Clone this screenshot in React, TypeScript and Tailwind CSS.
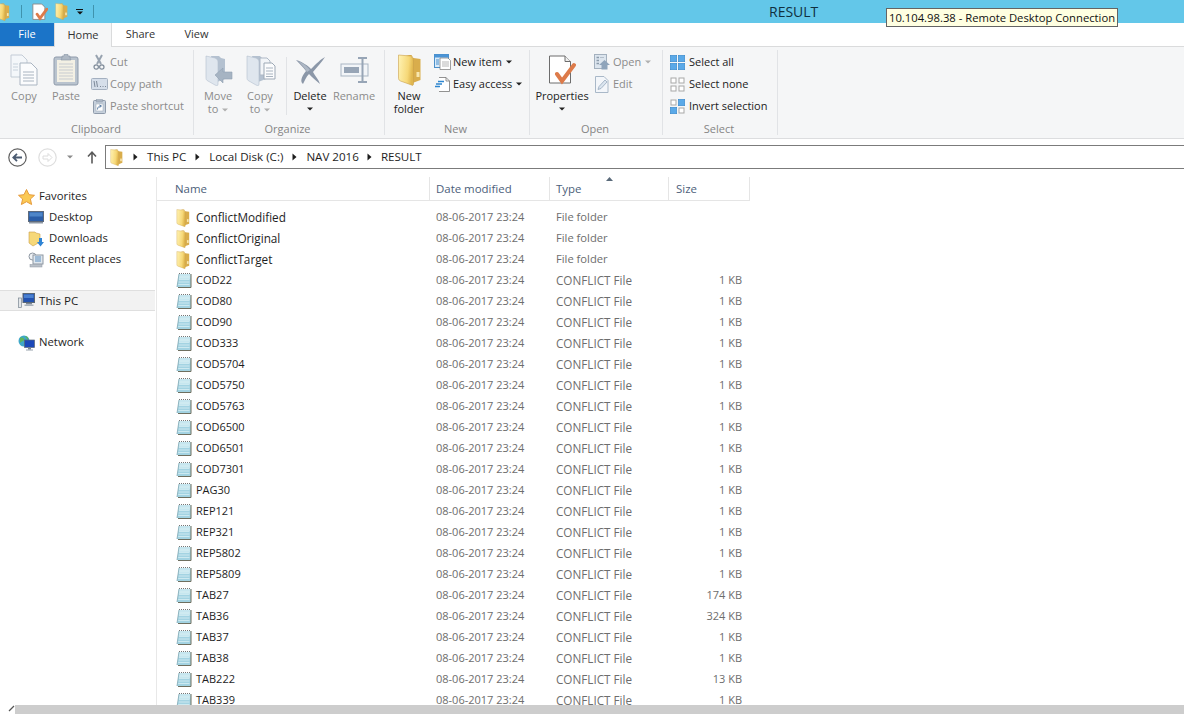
import React, { useId } from "react";

function Folder({ w = 14, h = 18 }: { w?: number; h?: number }) {
  const id = useId();
  return (
    <svg width={w} height={h} viewBox="0 0 24 32" className="shrink-0">
      <defs>
        <linearGradient id={id} x1="0" y1="0" x2="1" y2="0.2">
          <stop offset="0" stopColor="#fff3b4" />
          <stop offset="0.7" stopColor="#f6d878" />
          <stop offset="1" stopColor="#e0b64e" />
        </linearGradient>
      </defs>
      <path d="M8 1 L14 1 L16 4 L23 5 V26 L15 29 V3 Z" fill="#d9ad4c" />
      <path d="M1 1 L13 2 C15 3 16 5 16 7 V30 C16 31 15 32 14 31 L3 27 C1 26 1 25 1 23 Z" fill={`url(#${id})`} stroke="#c9a04a" strokeWidth="0.6" />
      <rect x="19" y="18" width="3" height="5" fill="#fff5c8" opacity="0.8" />
    </svg>
  );
}

function Note() {
  return (
    <svg width="16" height="17" viewBox="0 0 16 17" className="shrink-0">
      <path d="M3 2 H15 V15 H1 Z" fill="#a3d3e2" />
      <path d="M3 2 H15 L14 7 H2.2 Z" fill="#c6e6ef" />
      <path d="M15 2 V15.5 H2" fill="none" stroke="#6f6f5f" strokeWidth="1" />
      <path d="M3 2 L1 15" stroke="#7fa7b3" strokeWidth="0.8" />
      <path d="M3 1.5 H15" stroke="#777" strokeWidth="1.2" strokeDasharray="1 1" />
      <path d="M3.5 5 H13.5 M3 7.5 H13.5 M2.6 10 H13.5 M2.2 12.5 H13.5" stroke="#dff2f6" strokeWidth="0.7" />
    </svg>
  );
}

function Arrow() {
  return (
    <svg width="5" height="8" viewBox="0 0 5 8" className="shrink-0">
      <path d="M0.5 0.5 L4.5 4 L0.5 7.5 Z" fill="#1c1c1c" />
    </svg>
  );
}

function Down({ c = "#222" }: { c?: string }) {
  return (
    <svg width="6" height="4" viewBox="0 0 6 4" className="inline-block shrink-0">
      <path d="M0 0.5 H6 L3 3.5 Z" fill={c} />
    </svg>
  );
}

const CopyBig = () => (
  <svg width="28" height="32" viewBox="0 0 28 32">
    <path d="M1 1 H12 L17 6 V23 H1 Z" fill="#f4f7fa" stroke="#c3ccd6" />
    <path d="M10 9 H21 L27 15 V31 H10 Z" fill="#fbfcfd" stroke="#aab5c2" />
    <path d="M13 18 H24 M13 21 H24 M13 24 H24 M13 27 H24" stroke="#a9b4c0" />
    <path d="M3 10 H8 M3 13 H8 M3 16 H8" stroke="#c7d2dc" />
  </svg>
);
const PasteBig = () => (
  <svg width="26" height="32" viewBox="0 0 26 32">
    <rect x="1" y="3" width="24" height="28" rx="2" fill="#b9c3ce" stroke="#8f9bab" />
    <rect x="4" y="6" width="18" height="22" fill="#f3f0e4" />
    <path d="M6 10 H20 M6 13 H20 M6 16 H20 M6 19 H20 M6 22 H20 M6 25 H20" stroke="#c7cbd0" />
    <path d="M9 4 V2 H11 V0.5 H15 V2 H17 V4 L18 6 H8 Z" fill="#aeb8c4" stroke="#8794a4" strokeWidth="0.6" />
  </svg>
);
const Scissors = () => (
  <svg width="12" height="16" viewBox="0 0 12 16">
    <path d="M3 1 L8 10 M9 1 L4 10" stroke="#98a3b0" strokeWidth="2" />
    <circle cx="3.2" cy="13" r="2.2" fill="none" stroke="#7f8b99" strokeWidth="1.2" />
    <circle cx="8.8" cy="13" r="2.2" fill="none" stroke="#7f8b99" strokeWidth="1.2" />
  </svg>
);
const CopyPathI = () => (
  <svg width="17" height="12" viewBox="0 0 17 12">
    <rect x="0.5" y="0.5" width="16" height="11" rx="1" fill="#d5deea" stroke="#a4b0c0" />
    <path d="M3 3 L4 9 M5.5 3 L6.5 9" stroke="#7c8898" />
    <path d="M9 8.5 H10 M11.5 8.5 H12.5 M14 8.5 H15" stroke="#7c8898" />
  </svg>
);
const PasteShort = () => (
  <svg width="13" height="15" viewBox="0 0 13 15">
    <rect x="0.5" y="1.5" width="12" height="13" rx="1" fill="#c6d0dc" stroke="#8e9aaa" />
    <rect x="3.5" y="0.5" width="6" height="2.5" fill="#aab5c3" stroke="#8e9aaa" strokeWidth="0.5" />
    <rect x="3" y="5" width="7" height="7" fill="#fff" stroke="#9aa6b5" strokeWidth="0.5" />
    <path d="M4.5 10.5 C4.5 8 6 7 8 7 M6.5 6 L8.5 7 L6.5 8.5" stroke="#5d7fa6" fill="none" />
  </svg>
);
const MoveTo = () => (
  <svg width="28" height="31" viewBox="0 0 28 31" className="ml-[2px]">
    <path d="M6 1 H14 L16 3 L20 4 V24 L12 27 Z" fill="#b4c1d0" />
    <path d="M1 1 L10 3 C12 4 13 5 13 7 V29 C13 31 12 31 10 30 L3 26 C1 25 1 24 1 22 Z" fill="#dfe6ee" stroke="#b4c0cf" strokeWidth="0.6" />
    <path d="M10 20 L18 13 V17 H27 V24 H18 V28 Z" fill="#a6b4c3" stroke="#92a1b2" strokeWidth="0.6" />
  </svg>
);
const CopyTo = () => (
  <svg width="30" height="31" viewBox="0 0 30 31" className="ml-[2px]">
    <path d="M6 1 H14 L16 3 L20 4 V24 L12 27 Z" fill="#b4c1d0" />
    <path d="M1 1 L10 3 C12 4 13 5 13 7 V29 C13 31 12 31 10 30 L3 26 C1 25 1 24 1 22 Z" fill="#dfe6ee" stroke="#b4c0cf" strokeWidth="0.6" />
    <path d="M14 3 H21 L24 6 V20 H14 Z" fill="#f2f5f8" stroke="#aeb9c6" />
    <path d="M18 8 H26 L29 11 V24 H18 Z" fill="#fbfcfd" stroke="#9ea9b6" />
    <path d="M20 13 H27 M20 16 H27 M20 19 H27 M20 21.5 H27" stroke="#a9b4c0" />
  </svg>
);
const DeleteI = () => (
  <svg width="31" height="29" viewBox="0 0 31 29">
    <path d="M1 4 C8 6 13 10 16 13 C21 8 26 3 30 1 C27 6 22 11 18 16 C20 20 24 24 25 28 C21 25 17 21 14 18 C11 21 10 24 8 28 C5 26 6 21 11 15 C8 11 4 7 1 4 Z" fill="#8b97a8" />
    <path d="M3 5 C8 7 12 10 15 14 L12 16 C9 11 6 8 3 5 Z" fill="#aeb8c5" />
  </svg>
);
const RenameI = () => (
  <svg width="29" height="26" viewBox="0 0 29 26">
    <rect x="1" y="7" width="27" height="12" fill="#f2f5f8" stroke="#a9b5c3" />
    <rect x="4" y="10" width="15" height="6" fill="#97a5b6" />
    <path d="M18 1 H27 M18 25 H27 M22.5 1 V25" stroke="#97a5b6" strokeWidth="2" fill="none" />
  </svg>
);
const NewItem = () => (
  <svg width="17" height="16" viewBox="0 0 17 16">
    <rect x="0.5" y="0.5" width="14" height="13" fill="#d9ebfa" stroke="#4b8fc9" />
    <rect x="0.5" y="0.5" width="14" height="3" fill="#4b94d6" />
    <path d="M6 4 H14 L16.5 6.5 V15.5 H6 Z" fill="#fff" stroke="#777" strokeWidth="0.7" />
    <path d="M8 8 H15 M8 10 H15 M8 12 H15" stroke="#999" strokeWidth="0.7" />
    <path d="M2 6 H5 M2 8 H5 M2 10 H5" stroke="#4b8fc9" />
  </svg>
);
const EasyAccess = () => (
  <svg width="17" height="17" viewBox="0 0 17 17">
    <path d="M5 1.5 H12 L15.5 5 V15.5 H5" fill="#fff" stroke="#777" strokeWidth="0.8" />
    <path d="M12 1.5 V5 H15.5" fill="none" stroke="#777" strokeWidth="0.8" />
    <path d="M4 5.5 H10 M2 8 H8 M1 10.5 H6" stroke="#2f86d0" strokeWidth="1.3" />
  </svg>
);
const PropertiesI = () => (
  <svg width="28" height="30" viewBox="0 0 28 30">
    <path d="M1.5 1 H17 L22.5 6.5 V28 H1.5 Z" fill="#fff" stroke="#6d6d6d" />
    <path d="M17 1 V6.5 H22.5" fill="#eee" stroke="#6d6d6d" />
    <path d="M9 19 L14 26 L26 10" fill="none" stroke="#dd7b4a" strokeWidth="4" strokeLinecap="round" />
  </svg>
);
const SmallProp = () => (
  <svg width="16" height="18" viewBox="0 0 28 30">
    <path d="M1.5 1 H17 L22.5 6.5 V28 H1.5 Z" fill="#fff" stroke="#8a8a8a" strokeWidth="1.6" />
    <path d="M9 19 L14 26 L26 10" fill="none" stroke="#dd7b4a" strokeWidth="5" strokeLinecap="round" />
  </svg>
);
const OpenI = () => (
  <svg width="16" height="16" viewBox="0 0 16 16">
    <rect x="0.5" y="0.5" width="12" height="14" fill="#dce5ee" stroke="#a3b0be" />
    <path d="M2.5 3.5 H5 M2.5 6.5 H5 M2.5 9.5 H5" stroke="#8b9bab" strokeWidth="1.4" />
    <path d="M6 3.5 H10" stroke="#b4bfcb" />
    <path d="M5 11 L10.5 6 L16 11 H13.5 V15.5 H7.5 V11 Z" fill="#8ea4bb" />
  </svg>
);
const EditI = () => (
  <svg width="14" height="17" viewBox="0 0 14 17">
    <path d="M0.5 0.5 H9 L13 4.5 V16.5 H0.5 Z" fill="#f3f6fa" stroke="#a9b8c8" />
    <path d="M3 13.5 L4 10.5 L10 4 L12 6 L6 12.5 Z" fill="#dbe5ef" stroke="#8ca0b6" strokeWidth="0.7" />
  </svg>
);
const Grid4 = ({ on }: { on: boolean[] }) => (
  <svg width="15" height="15" viewBox="0 0 15 15" className="mr-[1px]">
    {[[0, 0], [8, 0], [0, 8], [8, 8]].map(([x, y], i) =>
      on[i] ? (
        <rect key={i} x={x + 0.25} y={y + 0.25} width="6.5" height="6.5" fill="#5aa9e8" stroke="#2d7fc4" strokeWidth="0.5" />
      ) : (
        <rect key={i} x={x + 1} y={y + 1} width="5" height="5" fill="#fff" stroke="#a8a8a8" />
      )
    )}
  </svg>
);
const Star = () => (
  <svg width="17" height="16" viewBox="0 0 17 16">
    <path d="M8.5 0.5 L11 5.7 L16.5 6.3 L12.4 10 L13.6 15.5 L8.5 12.7 L3.4 15.5 L4.6 10 L0.5 6.3 L6 5.7 Z" fill="#fbc954" stroke="#e59a3c" />
  </svg>
);
const Desktop = () => (
  <svg width="16" height="13" viewBox="0 0 16 13">
    <rect x="0.5" y="0.5" width="15" height="10" fill="#2b5ea8" stroke="#5d6a7c" />
    <rect x="1.5" y="1.5" width="13" height="4" fill="#4f86c8" />
    <rect x="1" y="11" width="14" height="1.5" fill="#8d97a3" />
  </svg>
);
const Downloads = () => (
  <svg width="16" height="16" viewBox="0 0 16 16">
    <path d="M1 1 H7 L8 2 L12 3 V11 L5 15 L1 12 Z" fill="#f6d878" stroke="#c9a04a" strokeWidth="0.6" />
    <path d="M11 7 H14 V11 H16 L12.5 15.5 L9 11 H11 Z" fill="#2f84d4" />
  </svg>
);
const Recent = () => (
  <svg width="16" height="16" viewBox="0 0 16 16">
    <circle cx="4.5" cy="4.5" r="3.5" fill="#f0f3f6" stroke="#8e97a2" />
    <rect x="5" y="3" width="10" height="9" fill="#dfe7ee" stroke="#8e97a2" />
    <path d="M7 5 H13 M7 7 H13 M7 9 H13" stroke="#5d8fc0" />
    <rect x="2" y="12.5" width="12" height="2.5" fill="#b9c0c8" stroke="#8e97a2" strokeWidth="0.5" />
  </svg>
);
const ThisPC = () => (
  <svg width="17" height="15" viewBox="0 0 17 15">
    <rect x="0.5" y="5" width="3" height="9.5" fill="#e3e6e9" stroke="#7a8692" strokeWidth="0.7" />
    <rect x="5" y="0.5" width="11.5" height="9" fill="#2352b0" stroke="#5a6775" />
    <rect x="6" y="1.5" width="9.5" height="3.5" fill="#4a80d0" />
    <rect x="8" y="10" width="6" height="1.5" fill="#7c8794" />
    <rect x="6.5" y="11.5" width="9" height="1.5" fill="#a9b2bc" />
  </svg>
);
const Network = () => (
  <svg width="17" height="16" viewBox="0 0 17 16">
    <circle cx="6" cy="6" r="5.5" fill="#3fa8c8" />
    <path d="M2 3 C4 2 7 3 6 5 C5 7 3 6 2 8 Z M7 1 C9 1 11 3 10 5 Z" fill="#5fb55a" />
    <rect x="6.5" y="5" width="10" height="7.5" fill="#1c48b8" stroke="#5a6775" strokeWidth="0.7" />
    <rect x="10" y="12.5" width="3" height="2" fill="#7c8794" />
    <rect x="8" y="14.5" width="7" height="1" fill="#9aa4ae" />
  </svg>
);

function Big({ icon, label, w, grey = true, caret = false }: { icon: React.ReactNode; label: React.ReactNode; w: string; grey?: boolean; caret?: boolean }) {
  return (
    <div className={`${w} flex flex-col items-center`}>
      <div className="h-[38px] flex items-center justify-center">{icon}</div>
      <div className={`text-center leading-[13px] whitespace-nowrap ${grey ? "text-[#8b8b8b]" : "text-[#222]"}`}>{label}</div>
      {caret && <div className="h-[13px] flex items-center"><Down c={grey ? "#aaa" : "#222"} /></div>}
    </div>
  );
}

function Small({ icon, label, grey = false, caret }: { icon: React.ReactNode; label: string; grey?: boolean; caret?: string }) {
  return (
    <div className={`h-[22px] flex items-center gap-[2px] whitespace-nowrap ${grey ? "text-[#8b8b8b]" : "text-[#222]"}`}>
      <span className="w-[18px] flex justify-center">{icon}</span>
      <span>{label}</span>
      {caret && <span className="ml-[2px] flex"><Down c={caret} /></span>}
    </div>
  );
}

function Group({ w, title, titleClass = "", children }: { w: string; title: string; titleClass?: string; children: React.ReactNode }) {
  return (
    <div className={`${w} flex flex-col border-r border-[#e1e3e6] my-[3px]`}>
      <div className="flex h-[73px] pt-[1px]">{children}</div>
      <div className={`text-center text-[#858585] leading-[12px] h-[12px] ${titleClass}`}>{title}</div>
    </div>
  );
}

function Side({ icon, label, pl }: { icon: React.ReactNode; label: string; pl: string }) {
  return (
    <div className={`h-[21px] flex items-center text-[#1e1e1e] text-[11.3px] ${pl}`}>
      <span className="w-[21px] flex">{icon}</span>
      <span>{label}</span>
    </div>
  );
}

const rows: [string, string][] = [
  ["COD22", "1 KB"], ["COD80", "1 KB"], ["COD90", "1 KB"], ["COD333", "1 KB"], ["COD5704", "1 KB"],
  ["COD5750", "1 KB"], ["COD5763", "1 KB"], ["COD6500", "1 KB"], ["COD6501", "1 KB"], ["COD7301", "1 KB"],
  ["PAG30", "1 KB"], ["REP121", "1 KB"], ["REP321", "1 KB"], ["REP5802", "1 KB"], ["REP5809", "1 KB"],
  ["TAB27", "174 KB"], ["TAB36", "324 KB"], ["TAB37", "1 KB"], ["TAB38", "1 KB"], ["TAB222", "13 KB"], ["TAB339", "1 KB"],
];

function Row({ icon, name, type, size, folder = false }: { icon: React.ReactNode; name: string; type: string; size?: string; folder?: boolean }) {
  return (
    <div className="h-[21px] flex items-center shrink-0 whitespace-nowrap">
      <div className="w-[279px] flex items-center pl-[19px]">
        <span className="w-[20px] flex">{icon}</span>
        <span className={`text-[#1e1e1e] ${folder ? "text-[11.75px]" : ""}`}>{name}</span>
      </div>
      <div className="w-[120px] text-[#6d6d6d]">08-06-2017 23:24</div>
      <div className={`w-[100px] text-[#6d6d6d] ${folder ? "text-[11.2px]" : "text-[11.7px]"}`}>{type}</div>
      <div className="w-[86px] text-right text-[#6d6d6d]">{size}</div>
    </div>
  );
}

function Head({ w, pl, label, children }: { w: string; pl: string; label: string; children?: React.ReactNode }) {
  return (
    <div className={`${w} ${pl} relative h-full flex items-center border-r border-[#e5e5e5] text-[11.45px] text-[#4c607a]`}>
      {label}
      {children}
    </div>
  );
}

export default function App() {
  return (
    <div className="relative w-[1184px] h-[714px] overflow-hidden bg-white text-[11px] flex flex-col" style={{ fontFamily: '"Open Sans", sans-serif' }}>
      <div className="h-[23px] shrink-0 bg-[#63c7e9] flex items-center relative">
        <div className="flex items-center ml-[-5px]">
          <Folder w={16} h={18} />
          <div className="w-px h-[13px] bg-[#3f93ad] ml-[10px]" />
          <div className="ml-[10px] flex"><SmallProp /></div>
          <div className="ml-[7px] flex"><Folder w={13} h={17} /></div>
          <div className="ml-[8px] flex flex-col items-center gap-[1px]">
            <div className="w-[7px] h-px bg-[#111]" />
            <Down c="#111" />
          </div>
          <div className="w-px h-[13px] bg-[#3f93ad] ml-[10px]" />
        </div>
        <div className="absolute left-[769px] top-[2px] text-[14px] leading-[20px] text-[#10303f]">RESULT</div>
      </div>

      <div className="h-[24px] shrink-0 flex border-b border-[#dadbdc] text-[#333]">
        <div className="w-[54px] h-[23px] bg-[#1b74c8] text-white flex items-center justify-center">File</div>
        <div className="w-[58px] h-[24px] bg-[#f5f6f7] border-x border-[#dadbdc] flex items-center justify-center">Home</div>
        <div className="w-[57px] flex items-center justify-center">Share</div>
        <div className="w-[55px] flex items-center justify-center">View</div>
      </div>

      <div className="h-[92px] shrink-0 bg-[#f5f6f7] border-b border-[#dcdddf] flex">
        <Group w="w-[194px]" title="Clipboard" titleClass="pr-[1px]">
          <div className="flex pl-[3px]">
            <Big w="w-[42px]" icon={<CopyBig />} label="Copy" />
            <Big w="w-[42px]" icon={<PasteBig />} label="Paste" />
            <div className="ml-[3px]">
              <Small grey icon={<Scissors />} label="Cut" />
              <Small grey icon={<CopyPathI />} label="Copy path" />
              <Small grey icon={<PasteShort />} label="Paste shortcut" />
            </div>
          </div>
        </Group>
        <Group w="w-[191px]" title="Organize" titleClass="pr-[3px]">
          <div className="flex pl-[3px]">
            <Big w="w-[42px]" icon={<MoveTo />} label={<>Move<br />to <span className="inline-flex align-middle ml-[1px]"><Down c="#b0b0b0" /></span></>} />
            <Big w="w-[42px]" icon={<CopyTo />} label={<>Copy<br />to <span className="inline-flex align-middle ml-[1px]"><Down c="#b0b0b0" /></span></>} />
            <div className="w-px h-[58px] mt-[6px] ml-[5px] bg-[#e1e3e6]" />
            <Big w="w-[44px] ml-[1px]" grey={false} icon={<DeleteI />} label="Delete" caret />
            <Big w="w-[44px]" icon={<RenameI />} label="Rename" />
          </div>
        </Group>
        <Group w="w-[145px]" title="New" titleClass="pr-[3px]">
          <div className="flex pl-[4px]">
            <Big w="w-[40px]" grey={false} icon={<Folder w={25} h={32} />} label={<>New<br />folder</>} />
            <div className="ml-[4px]">
              <Small icon={<NewItem />} label="New item" caret="#222" />
              <Small icon={<EasyAccess />} label="Easy access" caret="#222" />
            </div>
          </div>
        </Group>
        <Group w="w-[133px]" title="Open" titleClass="pr-[2px]">
          <div className="flex pl-[2px]">
            <Big w="w-[60px]" grey={false} icon={<PropertiesI />} label="Properties" caret />
            <div className="ml-[1px]">
              <Small grey icon={<OpenI />} label="Open" caret="#b0b0b0" />
              <Small grey icon={<EditI />} label="Edit" />
            </div>
          </div>
        </Group>
        <Group w="w-[115px]" title="Select" titleClass="pr-[2px]">
          <div className="pl-[6px]">
            <Small icon={<Grid4 on={[true, true, true, true]} />} label="Select all" />
            <Small icon={<Grid4 on={[false, false, false, false]} />} label="Select none" />
            <Small icon={<Grid4 on={[false, true, true, false]} />} label="Invert selection" />
          </div>
        </Group>
      </div>

      <div className="h-[38px] shrink-0 flex items-center pb-[2px]">
        <div className="w-[105px] flex items-center shrink-0">
          <svg width="19" height="19" viewBox="0 0 19 19" className="ml-[8px]">
            <circle cx="9.5" cy="9.5" r="8.7" fill="#fff" stroke="#5f5f5f" strokeWidth="1.2" />
            <path d="M14 9.5 H5.5 M9 5.8 L5.3 9.5 L9 13.2" fill="none" stroke="#4a5a70" strokeWidth="1.8" />
          </svg>
          <svg width="19" height="19" viewBox="0 0 19 19" className="ml-[11px]">
            <circle cx="9.5" cy="9.5" r="8.7" fill="#fff" stroke="#dedede" strokeWidth="1.2" />
            <path d="M5 8 H10 V5.5 L14 9.5 L10 13.5 V11 H5 Z" fill="none" stroke="#dcdcdc" />
          </svg>
          <span className="ml-[10px] flex"><Down c="#8b8b8b" /></span>
          <svg width="10" height="13" viewBox="0 0 10 13" className="ml-[14px]">
            <path d="M5 12.5 V2 M1 5.5 L5 1.2 L9 5.5" fill="none" stroke="#5a5a5a" strokeWidth="1.6" />
          </svg>
        </div>
        <div className="flex-1 h-[24px] border-y border-l border-[#7b7b7b] flex items-center text-[#1e1e1e] text-[11.6px] pl-[4px] whitespace-nowrap">
          <Folder w={13} h={17} />
          <span className="ml-[10px] flex"><Arrow /></span>
          <span className="ml-[9px]">This PC</span>
          <span className="ml-[9px] flex"><Arrow /></span>
          <span className="ml-[9px]">Local Disk (C:)</span>
          <span className="ml-[9px] flex"><Arrow /></span>
          <span className="ml-[9px]">NAV 2016</span>
          <span className="ml-[8px] flex"><Arrow /></span>
          <span className="ml-[9px]">RESULT</span>
        </div>
      </div>

      <div className="flex-1 min-h-0 flex">
        <div className="w-[157px] shrink-0 border-r border-[#e8e8e8] pt-[9px]">
          <Side pl="pl-[18px]" icon={<Star />} label="Favorites" />
          <Side pl="pl-[28px]" icon={<Desktop />} label="Desktop" />
          <Side pl="pl-[28px]" icon={<Downloads />} label="Downloads" />
          <Side pl="pl-[28px]" icon={<Recent />} label="Recent places" />
          <div className="mt-[20px] h-[21px] w-[155px] flex items-center bg-[#f2f2f2] border-y border-[#dfdfdf] pl-[18px] text-[#1e1e1e] text-[11.6px]">
            <span className="w-[21px] flex"><ThisPC /></span>
            This PC
          </div>
          <div className="mt-[21px]"><Side pl="pl-[18px]" icon={<Network />} label="Network" /></div>
        </div>
        <div className="flex-1 min-w-0 flex flex-col overflow-hidden">
          <div className="h-[24px] shrink-0 w-[593px] flex border-b border-[#e5e5e5]">
            <Head w="w-[273px]" pl="pl-[18px]" label="Name" />
            <Head w="w-[120px]" pl="pl-[6px]" label="Date modified" />
            <Head w="w-[119px]" pl="pl-[6px]" label="Type">
              <svg width="7" height="4" viewBox="0 0 7 4" className="absolute left-[56px] top-[0px]"><path d="M0 4 H7 L3.5 0 Z" fill="#5a6a7a" /></svg>
            </Head>
            <Head w="w-[81px]" pl="pl-[7px]" label="Size" />
          </div>
          <div className="pt-[6px] flex flex-col">
            <Row folder icon={<Folder />} name="ConflictModified" type="File folder" />
            <Row folder icon={<Folder />} name="ConflictOriginal" type="File folder" />
            <Row folder icon={<Folder />} name="ConflictTarget" type="File folder" />
            {rows.map(([n, s]) => (
              <Row key={n} icon={<Note />} name={n} type="CONFLICT File" size={s} />
            ))}
          </div>
        </div>
      </div>

      <div className="h-[9px] shrink-0 flex">
        <div className="w-[15px] bg-white flex items-start justify-end">
          <svg width="8" height="8" viewBox="0 0 8 8"><path d="M7 1 L2 6" stroke="#555" strokeWidth="1.2" /></svg>
        </div>
        <div className="flex-1 bg-[#cdcdcd]" />
      </div>

      <div className="absolute left-[886px] top-[8px] w-[232px] h-[19px] bg-[#ffffe1] border border-[#646464] text-[11.25px] leading-[17px] text-[#111] pl-[2px] whitespace-nowrap">10.104.98.38 - Remote Desktop Connection</div>
    </div>
  );
}
